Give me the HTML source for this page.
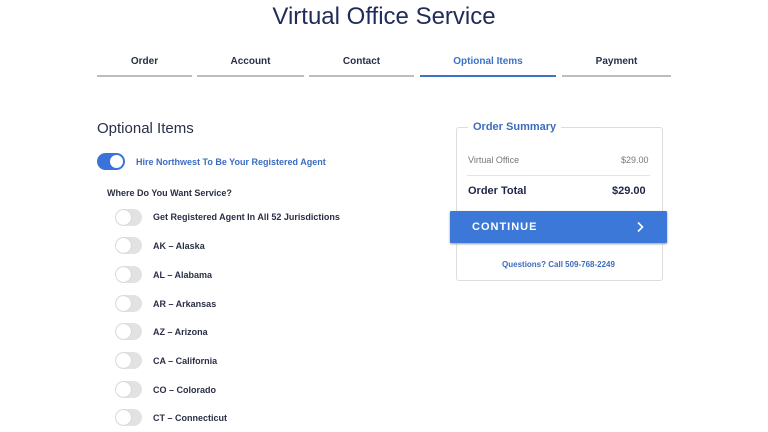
<!DOCTYPE html><html><head><style>
body{margin:0;width:768px;height:432px;background:#fff;font-family:"Liberation Sans",sans-serif;position:relative;overflow:hidden;color:#1e2548}
.a{position:absolute;white-space:nowrap}
.tab{position:absolute;top:56px;font-size:10px;font-weight:bold;text-align:center;color:#2a2f45}
.ul{position:absolute;top:75px;height:2px;background:#bdbdbd}
.tg{position:absolute;left:115px;width:27px;height:17px;border-radius:9px;background:#e2e2e2}
.tg:after{content:"";position:absolute;left:1px;top:1px;width:15px;height:15px;border-radius:50%;background:#fff;box-shadow:0 0 1px #aaa}
.lb{position:absolute;left:153px;font-size:9px;font-weight:bold;color:#2a2f45}
</style></head><body>
<div class="a" style="left:0;width:768px;text-align:center;top:3px;font-size:24px;color:#1f2b58">Virtual Office Service</div>
<div class="tab" style="left:97px;width:95px">Order</div><div class="ul" style="left:97px;width:95px"></div>
<div class="tab" style="left:197px;width:107px">Account</div><div class="ul" style="left:197px;width:107px"></div>
<div class="tab" style="left:309px;width:105px">Contact</div><div class="ul" style="left:309px;width:105px"></div>
<div class="tab" style="left:420px;width:136px;color:#3b73c8">Optional Items</div><div class="ul" style="left:420px;width:136px;background:#3b73c8"></div>
<div class="tab" style="left:562px;width:109px">Payment</div><div class="ul" style="left:562px;width:109px"></div>
<div class="a" style="left:97px;top:120px;font-size:15px;color:#2a2f45">Optional Items</div>
<div class="a" style="left:97px;top:153px;width:28px;height:17px;border-radius:9px;background:#3b73d8"><div style="position:absolute;right:2px;top:2px;width:13px;height:13px;border-radius:50%;background:#fff"></div></div>
<div class="a" style="left:136px;top:157px;font-size:9px;font-weight:bold;color:#3b6cc0">Hire Northwest To Be Your Registered Agent</div>
<div class="a" style="left:107px;top:188px;font-size:9px;font-weight:bold;color:#2a2f45">Where Do You Want Service?</div>
<div class="tg" style="top:209px"></div><div class="lb" style="top:212px">Get Registered Agent In All 52 Jurisdictions</div>
<div class="tg" style="top:237px"></div><div class="lb" style="top:241px">AK – Alaska</div>
<div class="tg" style="top:266px"></div><div class="lb" style="top:270px">AL – Alabama</div>
<div class="tg" style="top:295px"></div><div class="lb" style="top:299px">AR – Arkansas</div>
<div class="tg" style="top:323px"></div><div class="lb" style="top:327px">AZ – Arizona</div>
<div class="tg" style="top:352px"></div><div class="lb" style="top:356px">CA – California</div>
<div class="tg" style="top:381px"></div><div class="lb" style="top:385px">CO – Colorado</div>
<div class="tg" style="top:409px"></div><div class="lb" style="top:413px">CT – Connecticut</div>
<div class="a" style="left:456px;top:127px;width:205px;height:152px;border:1px solid #ddd;border-radius:3px"></div>
<div class="a" style="left:468px;top:121px;padding:0 5px;background:#fff;font-size:11px;font-weight:bold;color:#3b6cc0">Order Summary</div>
<div class="a" style="left:468px;top:155px;font-size:9px;color:#777">Virtual Office</div>
<div class="a" style="left:621px;top:155px;font-size:9px;color:#777">$29.00</div>
<div class="a" style="left:467px;top:175px;width:183px;height:1px;background:#e4e4e4"></div>
<div class="a" style="left:468px;top:185px;font-size:11px;font-weight:bold;color:#1e2548">Order Total</div>
<div class="a" style="left:612px;top:185px;font-size:11px;font-weight:bold;color:#1e2548">$29.00</div>
<div class="a" style="left:450px;top:211px;width:217px;height:32px;background:#3b78d8;box-shadow:0 1px 2px #999;border-radius:1px"></div>
<div class="a" style="left:472px;top:221px;font-size:11px;font-weight:bold;color:#fff;letter-spacing:1px">CONTINUE</div>
<svg class="a" style="left:635px;top:221px" width="10" height="12"><path d="M3 1.5L7.5 6L3 10.5" stroke="#fff" stroke-width="1.6" fill="none"/></svg>
<div class="a" style="left:456px;width:205px;text-align:center;top:260px;font-size:8px;font-weight:bold;color:#3b6cc0">Questions? Call 509-768-2249</div>
</body></html>
